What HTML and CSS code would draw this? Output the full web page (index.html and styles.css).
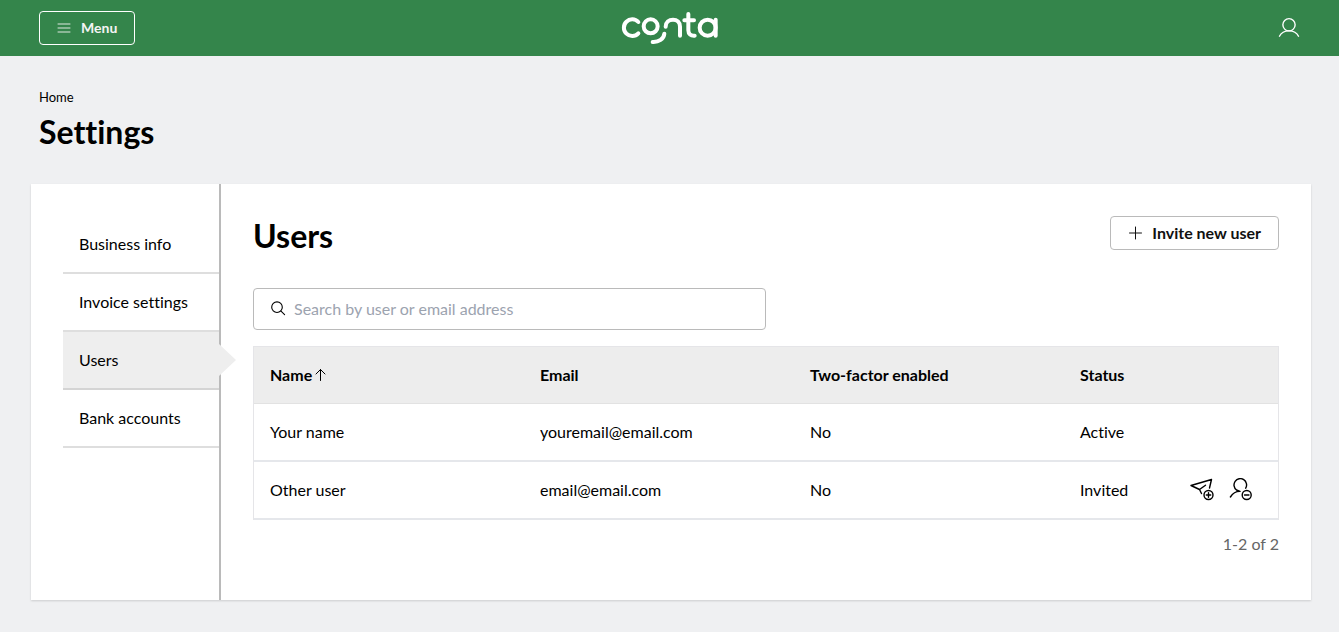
FILE: index.html
```html
<!DOCTYPE html>
<html lang="en">
<head>
<meta charset="utf-8">
<meta name="viewport" content="width=device-width, initial-scale=1">
<title>Settings – Users</title>
<link rel="stylesheet" href="styles.css">
</head>
<body>
<header class="topbar">
  <div class="topbar-side">
    <button class="button button-menu" type="button">
      <svg class="icon-small" viewBox="0 0 14 14" aria-hidden="true"><path d="M1 3h12M1 7h12M1 11h12"/></svg>
      Menu
    </button>
  </div>
  <a class="logo" href="#" aria-label="Conta">
    <svg viewBox="33 33 291 102" aria-hidden="true">
      <path d="M85 66A25 25 0 1 0 85 100"/>
      <circle cx="122" cy="79" r="21"/>
      <path d="M163 101C162 117 146 127 128 126"/>
      <path d="M167 80C167 67 177 59 189 59S210 67 210 80V107"/>
      <path d="M235 42V91C235 102 242 108 254 107M223 61H252"/>
      <circle cx="293" cy="83" r="24"/>
      <path d="M317 59V107"/>
    </svg>
  </a>
  <div class="topbar-side topbar-end">
    <button class="icon-button" type="button" aria-label="Account">
      <svg class="icon-account" viewBox="0 0 24 24" aria-hidden="true"><circle cx="12" cy="8.500" r="6.700"/><path d="M1.600 21C3.600 17 7.200 15.200 12 15.200S20.400 17 22.400 21"/></svg>
    </button>
  </div>
</header>

<div class="page">
  <div class="page-head">
    <nav aria-label="Breadcrumb"><a class="breadcrumb" href="#">Home</a></nav>
    <h1 class="title">Settings</h1>
  </div>

  <div class="card">
    <nav class="side" aria-label="Settings">
      <a class="side-link" href="#">Business info</a>
      <a class="side-link" href="#">Invoice settings</a>
      <a class="side-link side-link-active" href="#" aria-current="page">Users</a>
      <a class="side-link" href="#">Bank accounts</a>
    </nav>

    <main class="content">
      <div class="content-head">
        <h2 class="title">Users</h2>
        <button class="button button-invite" type="button">
          <svg class="icon-small" viewBox="0 0 14 14" aria-hidden="true"><path d="M7.500 1v12M1.500 7h12"/></svg>
          Invite new user
        </button>
      </div>

      <label class="search">
        <svg class="icon-search" viewBox="0 0 16 16" aria-hidden="true"><circle cx="7" cy="6.200" r="5.300"/><path d="M11 10.200l3.600 3.400"/></svg>
        <input class="search-input" type="search" placeholder="Search by user or email address" aria-label="Search by user or email address">
      </label>

      <table class="users">
        <colgroup><col class="col-wide"><col class="col-wide"><col class="col-wide"><col><col class="col-actions"></colgroup>
        <thead>
          <tr>
            <th scope="col" aria-sort="ascending"><span class="sorted">Name <svg class="icon-sort" viewBox="0 0 12 14" aria-hidden="true"><path d="M5.500 12.500V1.500M1 6L5.500 1.500L10 6"/></svg></span></th>
            <th scope="col">Email</th>
            <th scope="col">Two-factor enabled</th>
            <th scope="col">Status</th>
            <td></td>
          </tr>
        </thead>
        <tbody>
          <tr>
            <td>Your name</td>
            <td>youremail@email.com</td>
            <td>No</td>
            <td>Active</td>
            <td></td>
          </tr>
          <tr>
            <td>Other user</td>
            <td>email@email.com</td>
            <td>No</td>
            <td>Invited</td>
            <td>
              <div class="actions">
                <button class="icon-button" type="button" aria-label="Resend invitation">
                  <svg class="icon-action" viewBox="0 0 24 24" aria-hidden="true"><path d="M19.500 10L21.500 1.500L1 7.500L9.500 11.500L15.500 7.200M9.500 11.500L11.500 15.500"/><circle cx="18.500" cy="17" r="4.500"/><path d="M16.300 17h4.400M18.500 14.800v4.400"/></svg>
                </button>
                <button class="icon-button" type="button" aria-label="Remove user">
                  <svg class="icon-action" viewBox="0 0 24 24" aria-hidden="true"><path d="M16.700 10.200A6.300 6.300 0 1 0 7.500 12L11 13.400C6.500 13.300 3.500 15.700 1.400 19"/><circle cx="17.700" cy="17" r="4.500"/><path d="M15.500 17h4.400"/></svg>
                </button>
              </div>
            </td>
          </tr>
        </tbody>
      </table>
      <p class="count">1-2 of 2</p>
    </main>
  </div>
</div>
</body>
</html>
```
FILE: styles.css
```css
* {
  box-sizing: border-box;
}

body {
  margin: 0;
  background: #eff0f2;
  color: #000;
  font-family: Lato, sans-serif;
  font-size: 16px;
  font-variant-ligatures: none;
  line-height: 24px;
}

svg {
  display: block;
  flex: none;
  fill: none;
  stroke: currentColor;
  stroke-linecap: round;
  stroke-linejoin: round;
}

a {
  color: inherit;
  text-decoration: none;
}

.topbar {
  display: flex;
  align-items: center;
  height: 56px;
  padding: 0 39px;
  background: #34854b;
  color: #fff;
}

.topbar-side {
  display: flex;
  flex: 1;
}

.topbar-end {
  justify-content: flex-end;
}

.logo svg {
  width: 97px;
  height: 34px;
  stroke-width: 12;
}

.button {
  display: flex;
  align-items: center;
  height: 34px;
  padding: 0 17px;
  gap: 10px;
  border: 1px solid #bababa;
  border-radius: 4px;
  background: #fff;
  color: #111;
  font: inherit;
  font-weight: 700;
  cursor: pointer;
}

.button-menu {
  border-color: #fff;
  background: transparent;
  color: #f4f4f4;
  font-size: 14px;
}

.icon-small {
  width: 14px;
  height: 14px;
  stroke-width: 1;
}

.button-menu .icon-small {
  opacity: 0.9;
}

.icon-button {
  padding: 0;
  border: 0;
  background: none;
  color: inherit;
  cursor: pointer;
}

.icon-account {
  width: 22px;
  height: 22px;
  stroke-width: 1.5;
}

.page {
  padding: 29px 28px 31px 31px;
}

.page-head {
  padding: 0 8px;
}

.breadcrumb {
  display: block;
  font-size: 13px;
}

.title {
  margin: 0;
  font-size: 32px;
  font-weight: 700;
  line-height: 40px;
}

.page-head .title {
  margin: 3px 0 32px;
}

.card {
  display: flex;
  min-height: 416px;
  background: #fff;
  box-shadow: 0 1px 2px rgba(0, 0, 0, 0.15);
}

.side {
  flex: none;
  width: 190px;
  padding: 32px 0 32px 32px;
  border-right: 2px solid #bababa;
}

.side-link {
  display: block;
  padding: 16px;
  border-bottom: 2px solid #dedede;
}

.side-link-active {
  position: relative;
  border-color: #d4d4d4;
  background: #eee;
}

.side-link-active::after {
  content: "";
  position: absolute;
  top: 12px;
  left: 100%;
  width: 17px;
  height: 32px;
  background: #eee;
  clip-path: polygon(0 0, 100% 50%, 0 100%);
}

.content {
  flex: 1;
  min-width: 0;
  padding: 32px;
}

.content-head {
  display: flex;
  align-items: flex-start;
  justify-content: space-between;
  margin-bottom: 32px;
}

.search {
  display: flex;
  align-items: center;
  width: 50%;
  height: 42px;
  margin-bottom: 16px;
  padding: 0 16px;
  gap: 8px;
  border: 1px solid #bababa;
  border-radius: 4px;
}

.icon-search {
  width: 16px;
  height: 16px;
  stroke-width: 1.1;
}

.search-input {
  flex: 1;
  min-width: 0;
  padding: 0;
  border: 0;
  outline: 0;
  background: none;
  font: inherit;
}

.search-input::placeholder {
  color: #9ca3af;
  opacity: 1;
}

.users {
  width: 100%;
  border: 1px solid #e5e5e8;
  border-bottom: 0;
  border-spacing: 0;
  table-layout: fixed;
}

.col-wide {
  width: 270px;
}

.col-actions {
  width: 104px;
}

.users th,
.users td {
  height: 58px;
  padding: 0 16px;
  border-bottom: 2px solid #e5e7eb;
  text-align: left;
}

.users thead th,
.users thead td {
  height: 57px;
  border-bottom: 1px solid #e2e2e2;
  background: #ededed;
}

.sorted {
  display: flex;
  align-items: center;
  gap: 3px;
}

.icon-sort {
  width: 12px;
  height: 14px;
  stroke-width: 1;
}

.actions {
  display: flex;
  gap: 15px;
}

.icon-action {
  width: 24px;
  height: 24px;
  stroke-width: 1.4;
}

.count {
  margin: 12px 0 0;
  color: #666;
  text-align: right;
}
```
